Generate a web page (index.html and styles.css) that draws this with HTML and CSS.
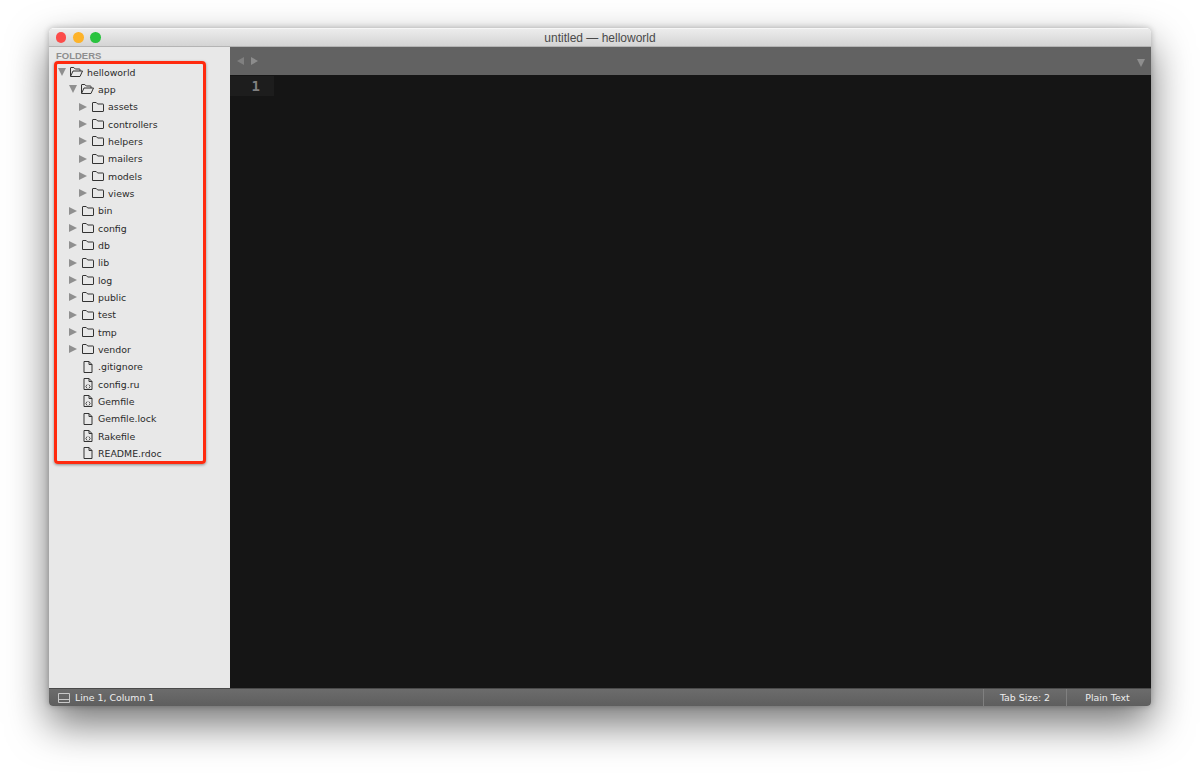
FILE: index.html
```html
<!DOCTYPE html>
<html lang="en">
<head>
    <meta charset="UTF-8">
    <title>untitled — helloworld</title>
    <link rel="stylesheet" href="styles.css">
</head>
<body>
    <svg class="defs" width="0" height="0">
        <symbol id="closed" viewBox="0 0 14 12"><path d="M1.500 10.500V2Q1.500 1.500 2 1.500H5.200L6.700 3H12Q12.500 3 12.500 3.500V10Q12.500 10.500 12 10.500Z" fill="none" stroke="#333" stroke-width="1"/></symbol>
        <symbol id="open" viewBox="0 0 14 12"><path d="M1.500 10V2Q1.500 1.500 2 1.500H4.800L6.300 3H10.500Q11 3 11 3.500V5M1.500 10.500L4 5H13.500L11 10.500Z" fill="none" stroke="#333" stroke-width="1"/></symbol>
        <symbol id="file" viewBox="0 0 10 12"><path d="M1 .5H6L9 3.500V11.500H1ZM6 .5V3.500H9" fill="none" stroke="#333" stroke-width="1"/></symbol>
        <symbol id="code" viewBox="0 0 10 12"><path d="M1 .5H6L9 3.500V11.500H1ZM6 .5V3.500H9" fill="none" stroke="#333" stroke-width="1"/><path d="M4.200 6.500L2.800 8.500L4.200 10.500M5.800 6.500L7.200 8.500L5.800 10.500" fill="none" stroke="#333" stroke-width=".8"/></symbol>
    </svg>

    <div class="window">
        <div class="titlebar">
            <span class="light red"></span>
            <span class="light yellow"></span>
            <span class="light green"></span>
            <span class="title">untitled — helloworld</span>
        </div>
        <div class="main">
            <aside class="sidebar">
                <div class="folders-label">FOLDERS</div>
                <ul class="tree">
                    <li class="row depth0"><i class="arrow down"></i><svg class="folder"><use href="#open"/></svg>helloworld</li>
                    <li class="row depth1"><i class="arrow down"></i><svg class="folder"><use href="#open"/></svg>app</li>
                    <li class="row depth2"><i class="arrow"></i><svg class="folder"><use href="#closed"/></svg>assets</li>
                    <li class="row depth2"><i class="arrow"></i><svg class="folder"><use href="#closed"/></svg>controllers</li>
                    <li class="row depth2"><i class="arrow"></i><svg class="folder"><use href="#closed"/></svg>helpers</li>
                    <li class="row depth2"><i class="arrow"></i><svg class="folder"><use href="#closed"/></svg>mailers</li>
                    <li class="row depth2"><i class="arrow"></i><svg class="folder"><use href="#closed"/></svg>models</li>
                    <li class="row depth2"><i class="arrow"></i><svg class="folder"><use href="#closed"/></svg>views</li>
                    <li class="row depth1"><i class="arrow"></i><svg class="folder"><use href="#closed"/></svg>bin</li>
                    <li class="row depth1"><i class="arrow"></i><svg class="folder"><use href="#closed"/></svg>config</li>
                    <li class="row depth1"><i class="arrow"></i><svg class="folder"><use href="#closed"/></svg>db</li>
                    <li class="row depth1"><i class="arrow"></i><svg class="folder"><use href="#closed"/></svg>lib</li>
                    <li class="row depth1"><i class="arrow"></i><svg class="folder"><use href="#closed"/></svg>log</li>
                    <li class="row depth1"><i class="arrow"></i><svg class="folder"><use href="#closed"/></svg>public</li>
                    <li class="row depth1"><i class="arrow"></i><svg class="folder"><use href="#closed"/></svg>test</li>
                    <li class="row depth1"><i class="arrow"></i><svg class="folder"><use href="#closed"/></svg>tmp</li>
                    <li class="row depth1"><i class="arrow"></i><svg class="folder"><use href="#closed"/></svg>vendor</li>
                    <li class="row depth1 leaf"><svg class="doc"><use href="#file"/></svg>.gitignore</li>
                    <li class="row depth1 leaf"><svg class="doc"><use href="#code"/></svg>config.ru</li>
                    <li class="row depth1 leaf"><svg class="doc"><use href="#code"/></svg>Gemfile</li>
                    <li class="row depth1 leaf"><svg class="doc"><use href="#file"/></svg>Gemfile.lock</li>
                    <li class="row depth1 leaf"><svg class="doc"><use href="#code"/></svg>Rakefile</li>
                    <li class="row depth1 leaf"><svg class="doc"><use href="#file"/></svg>README.rdoc</li>
                </ul>
                <div class="highlight"></div>
            </aside>
            <section class="editor">
                <div class="tabbar">
                    <i class="nav left"></i>
                    <i class="nav right"></i>
                    <i class="tab-menu"></i>
                </div>
                <div class="code">
                    <div class="gutter-line">1</div>
                </div>
            </section>
        </div>
        <footer class="statusbar">
            <svg class="panel-icon" width="12" height="10" viewBox="0 0 12 10"><path d="M.5 .5H11.500V9.500H.5ZM.5 6.500H11.500" fill="none" stroke="#c8c8c8"/></svg>
            <span class="position">Line 1, Column 1</span>
            <span class="status-item tabsize">Tab Size: 2</span>
            <span class="status-item syntax">Plain Text</span>
        </footer>
    </div>
</body>
</html>
```

FILE: styles.css
```css
/* page */
body {
    margin: 0;
    height: 775px;
    overflow: hidden;
    background-color: #fff;
    font-family: "DejaVu Sans", sans-serif;
    padding: 28px 49px 0;
    box-sizing: border-box;
}

.defs {
    display: block;
}

/* window */
.window {
    height: 678px;
    display: flex;
    flex-direction: column;
    border-radius: 5px 5px 4px 4px;
    overflow: hidden;
    box-shadow: 0 18px 40px rgba(0, 0, 0, 0.55), 0 0 6px rgba(0, 0, 0, 0.25);
}

.titlebar {
    position: relative;
    height: 19px;
    flex: none;
    display: flex;
    align-items: center;
    gap: 6.500px;
    padding-left: 6.500px;
    box-sizing: border-box;
    background: linear-gradient(#ececec, #d4d4d4);
    border-top: 1px solid #f6f6f6;
    border-bottom: 1px solid #b4b4b4;
}

.light {
    width: 10.800px;
    height: 10.800px;
    border-radius: 50%;
}

.red { background-color: #fc4c4a; }
.yellow { background-color: #fdb32a; }
.green { background-color: #2ac33f; }

.title {
    position: absolute;
    left: 0;
    right: 0;
    text-align: center;
    font-family: "Liberation Sans", sans-serif;
    font-size: 12px;
    color: #4a4a4a;
}

.main {
    flex: 1;
    display: flex;
    min-height: 0;
}

/* sidebar */
.sidebar {
    position: relative;
    width: 181px;
    flex: none;
    background-color: #e8e8e8;
    box-sizing: border-box;
}

.folders-label {
    height: 16.500px;
    padding: 3px 0 0 7px;
    box-sizing: border-box;
    font-size: 9.500px;
    line-height: 12px;
    font-weight: 700;
    font-family: "Liberation Sans", sans-serif;
    color: #8e8e8e;
}

.tree {
    list-style: none;
    margin: 0;
    padding: 0;
}

.row {
    height: 17.340px;
    display: flex;
    align-items: center;
    font-size: 9.400px;
    color: #2a2a2a;
}

.depth0 { padding-left: 9px; }
.depth1 { padding-left: 20px; }
.depth2 { padding-left: 30px; }
.leaf { padding-left: 34px; }

.arrow {
    width: 0;
    height: 0;
    margin-right: 4px;
    border-style: solid;
    border-width: 4.500px 0 4.500px 8px;
    border-color: transparent transparent transparent #8f8f8f;
}

.arrow.down {
    border-width: 8px 4.500px 0;
    border-color: #8f8f8f transparent transparent;
    margin-right: 3px;
}

.folder {
    width: 14px;
    height: 12px;
    margin-right: 3px;
}

.arrow.down + .folder {
    margin-right: 4px;
}

.doc {
    width: 10px;
    height: 12px;
    margin-right: 5px;
}

/* red annotation box */
.highlight {
    position: absolute;
    left: 4.500px;
    top: 14px;
    width: 152px;
    height: 403px;
    box-sizing: border-box;
    border: 3.500px solid #ff2a0e;
    border-radius: 4px;
    box-shadow: 0 1px 3px rgba(0, 0, 0, 0.4);
}

/* editor */
.editor {
    flex: 1;
    display: flex;
    flex-direction: column;
    min-width: 0;
}

.tabbar {
    position: relative;
    height: 28px;
    flex: none;
    display: flex;
    align-items: center;
    gap: 7px;
    padding-left: 7px;
    box-sizing: border-box;
    background-color: #626262;
}

.nav {
    width: 0;
    height: 0;
    border-style: solid;
}

.nav.left {
    border-width: 4px 7px 4px 0;
    border-color: transparent #808080 transparent transparent;
}

.nav.right {
    border-width: 4px 0 4px 7px;
    border-color: transparent transparent transparent #8c8c8c;
}

.tab-menu {
    position: absolute;
    right: 6px;
    top: 12px;
    border-style: solid;
    border-width: 8px 4.500px 0;
    border-color: #8e8e8e transparent transparent;
}

.code {
    flex: 1;
    background-color: #151515;
}

.gutter-line {
    width: 44px;
    height: 20px;
    margin-top: 1px;
    padding-right: 14px;
    box-sizing: border-box;
    text-align: right;
    background-color: #1d1d1d;
    font-family: "DejaVu Sans Mono", monospace;
    font-size: 14px;
    font-weight: 700;
    line-height: 20px;
    color: #808080;
}

/* status bar */
.statusbar {
    height: 18px;
    flex: none;
    display: flex;
    align-items: center;
    box-sizing: border-box;
    padding-left: 9px;
    background: linear-gradient(#6c6c6c, #5e5e5e);
    border-top: 1px solid #4a4a4a;
    font-size: 9.400px;
    line-height: 15px;
    color: #eee;
}

.panel-icon {
    margin-right: 5px;
}

.position {
    margin-right: auto;
    padding-bottom: 1px;
}

.status-item {
    height: 100%;
    display: flex;
    align-items: center;
    justify-content: center;
    border-left: 1px solid #808080;
    box-sizing: border-box;
    padding-bottom: 1px;
}

.tabsize { width: 83px; }
.syntax { width: 85px; padding-right: 3px; }
```
